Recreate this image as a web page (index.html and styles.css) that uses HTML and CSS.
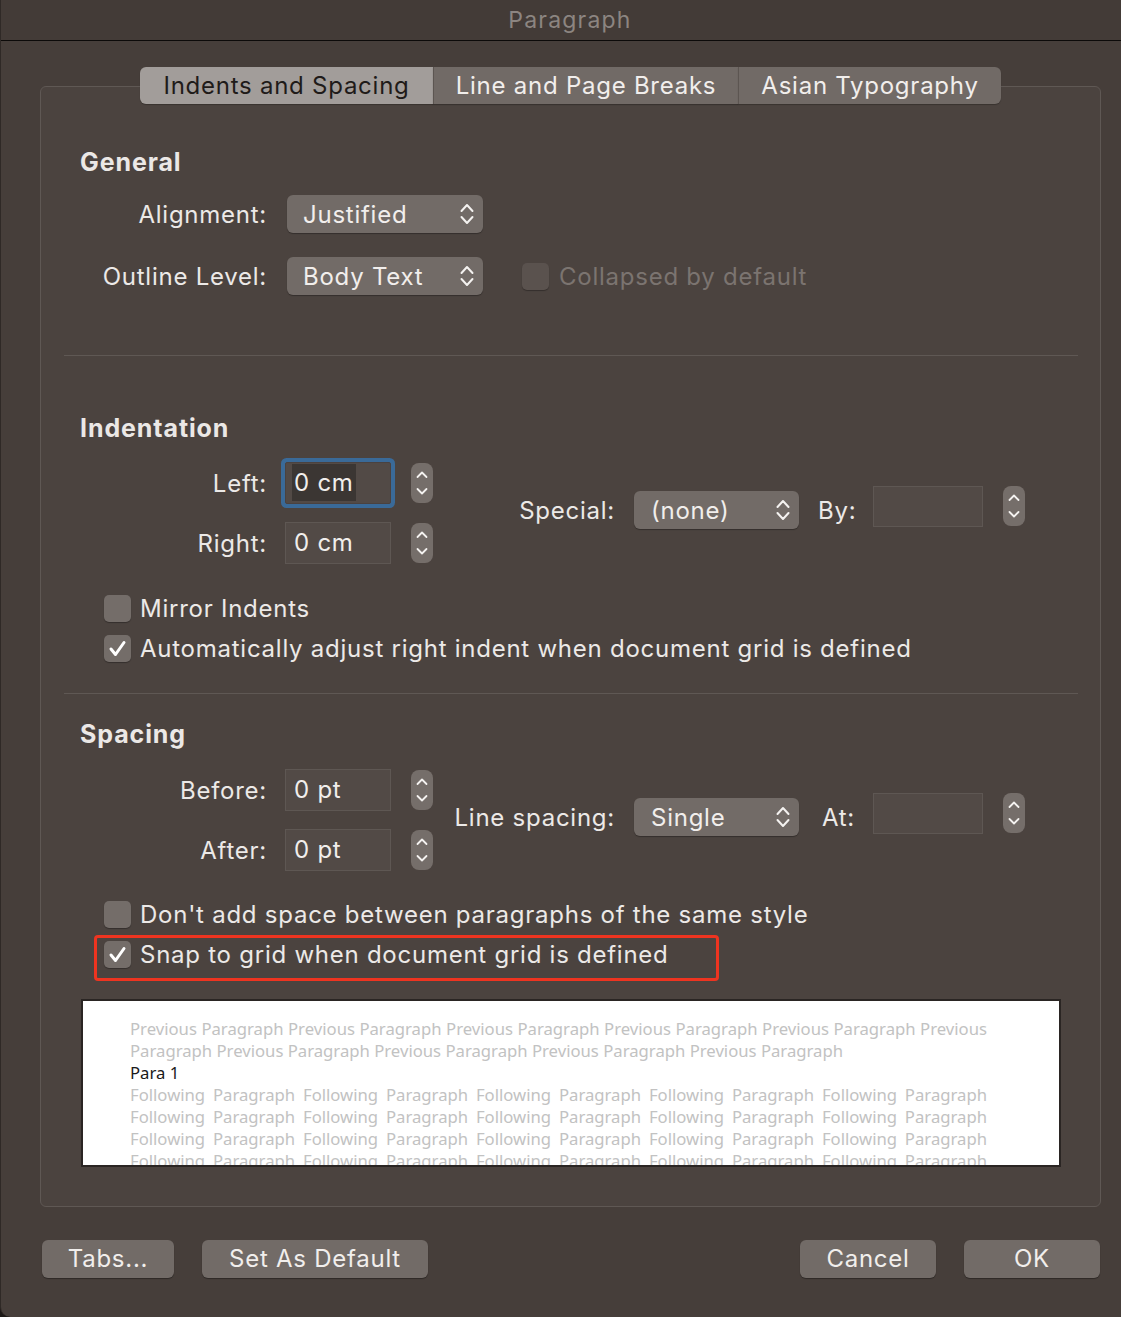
FILE: index.html
```html
<!doctype html>
<html>
  <head>
    <meta charset="UTF-8" />
    <title>Paragraph</title>
    <link rel="stylesheet" href="styles.css">
  </head>
  <body>
    <div class="window">
      <div class="titlebar">Paragraph</div>

      <div class="panel">
        <div class="tabs">
          <div class="tab selected tab-indents">Indents and Spacing</div>
          <div class="tab tab-breaks">Line and Page Breaks</div>
          <div class="tab tab-asian">Asian Typography</div>
        </div>

        <!-- General -->
        <div class="heading heading-general">General</div>
        <div class="form-row first">
          <div class="label">Alignment:</div>
          <div class="popup">
            <span>Justified</span>
            <svg class="chevrons" width="14" height="24" viewBox="0 0 14 24"><path d="M1.5 9 L7 3 L12.5 9 M1.5 15 L7 21 L12.5 15" /></svg>
          </div>
        </div>
        <div class="form-row">
          <div class="label">Outline Level:</div>
          <div class="popup">
            <span>Body Text</span>
            <svg class="chevrons" width="14" height="24" viewBox="0 0 14 24"><path d="M1.5 9 L7 3 L12.5 9 M1.5 15 L7 21 L12.5 15" /></svg>
          </div>
          <div class="check disabled collapsed">
            <span class="box"></span>
            <span>Collapsed by default</span>
          </div>
        </div>

        <div class="separator sep-1"></div>

        <!-- Indentation -->
        <div class="heading heading-indent">Indentation</div>
        <div class="field-block block-indent">
          <div class="field-col">
            <div class="field-row">
              <div class="label">Left:</div>
              <div class="field focused"><span class="selected-text">0 cm</span></div>
              <svg class="stepper" width="22" height="40" viewBox="0 0 22 40"><rect width="22" height="40" rx="8" /><path d="M6.5 14 L11 9.5 L15.5 14 M6.5 26 L11 30.5 L15.5 26" /></svg>
            </div>
            <div class="field-row">
              <div class="label">Right:</div>
              <div class="field">0 cm</div>
              <svg class="stepper" width="22" height="40" viewBox="0 0 22 40"><rect width="22" height="40" rx="8" /><path d="M6.5 14 L11 9.5 L15.5 14 M6.5 26 L11 30.5 L15.5 26" /></svg>
            </div>
          </div>
          <div class="side-group">
            <div class="side-label">Special:</div>
            <div class="popup popup-side">
              <span>(none)</span>
              <svg class="chevrons" width="14" height="24" viewBox="0 0 14 24"><path d="M1.5 9 L7 3 L12.5 9 M1.5 15 L7 21 L12.5 15" /></svg>
            </div>
            <div class="by-label">By:</div>
            <div class="field field-side"></div>
            <svg class="stepper raised" width="22" height="40" viewBox="0 0 22 40"><rect width="22" height="40" rx="8" /><path d="M6.5 14 L11 9.5 L15.5 14 M6.5 26 L11 30.5 L15.5 26" /></svg>
          </div>
        </div>

        <div class="check-list list-indent">
          <div class="check">
            <span class="box"></span>
            <span>Mirror Indents</span>
          </div>
          <div class="check">
            <span class="box"><svg width="27" height="27" viewBox="0 0 27 27"><path d="M7 14 L11.5 19.5 L20 7.5" /></svg></span>
            <span>Automatically adjust right indent when document grid is defined</span>
          </div>
        </div>

        <div class="separator sep-2"></div>

        <!-- Spacing -->
        <div class="heading heading-spacing">Spacing</div>
        <div class="field-block block-spacing">
          <div class="field-col">
            <div class="field-row">
              <div class="label">Before:</div>
              <div class="field">0 pt</div>
              <svg class="stepper" width="22" height="40" viewBox="0 0 22 40"><rect width="22" height="40" rx="8" /><path d="M6.5 14 L11 9.5 L15.5 14 M6.5 26 L11 30.5 L15.5 26" /></svg>
            </div>
            <div class="field-row">
              <div class="label">After:</div>
              <div class="field">0 pt</div>
              <svg class="stepper" width="22" height="40" viewBox="0 0 22 40"><rect width="22" height="40" rx="8" /><path d="M6.5 14 L11 9.5 L15.5 14 M6.5 26 L11 30.5 L15.5 26" /></svg>
            </div>
          </div>
          <div class="side-group">
            <div class="side-label">Line spacing:</div>
            <div class="popup popup-side">
              <span>Single</span>
              <svg class="chevrons" width="14" height="24" viewBox="0 0 14 24"><path d="M1.5 9 L7 3 L12.5 9 M1.5 15 L7 21 L12.5 15" /></svg>
            </div>
            <div class="by-label">At:</div>
            <div class="field field-side"></div>
            <svg class="stepper raised" width="22" height="40" viewBox="0 0 22 40"><rect width="22" height="40" rx="8" /><path d="M6.5 14 L11 9.5 L15.5 14 M6.5 26 L11 30.5 L15.5 26" /></svg>
          </div>
        </div>

        <div class="check-list list-spacing">
          <div class="check">
            <span class="box"></span>
            <span>Don't add space between paragraphs of the same style</span>
          </div>
          <div class="check marked">
            <span class="box"><svg width="27" height="27" viewBox="0 0 27 27"><path d="M7 14 L11.5 19.5 L20 7.5" /></svg></span>
            <span>Snap to grid when document grid is defined</span>
            <span class="highlight"></span>
          </div>
        </div>

        <!-- Preview -->
        <div class="preview">
          <div class="preview-text">
            <div class="line prev justify">Previous Paragraph Previous Paragraph Previous Paragraph Previous Paragraph Previous Paragraph Previous</div>
            <div class="line prev">Paragraph Previous Paragraph Previous Paragraph Previous Paragraph Previous Paragraph</div>
            <div class="line current">Para 1</div>
            <div class="line follow justify">Following Paragraph Following Paragraph Following Paragraph Following Paragraph Following Paragraph</div>
            <div class="line follow justify">Following Paragraph Following Paragraph Following Paragraph Following Paragraph Following Paragraph</div>
            <div class="line follow justify">Following Paragraph Following Paragraph Following Paragraph Following Paragraph Following Paragraph</div>
            <div class="line follow justify">Following Paragraph Following Paragraph Following Paragraph Following Paragraph Following Paragraph</div>
          </div>
        </div>
      </div>

      <div class="buttons">
        <div class="button btn-tabs">Tabs...</div>
        <div class="button btn-default">Set As Default</div>
        <div class="spacer"></div>
        <div class="button btn-cancel">Cancel</div>
        <div class="button btn-ok">OK</div>
      </div>
    </div>
  </body>
</html>
```

FILE: styles.css
```css
body {
  margin: 0;
  padding: 0;
  background-color: #1c1816;
  font-family: "Inter", "Liberation Sans", sans-serif;
  color: #ece9e7;
}

.window {
  width: 1121px;
  height: 1317px;
  background-color: #463e3a;
  border-bottom-left-radius: 10px;
  overflow: hidden;
  box-sizing: border-box;
  border-left: 1px solid #2f2926;
  letter-spacing: 0.75px;
}

.titlebar {
  height: 40px;
  line-height: 40px;
  background-color: #433b37;
  border-bottom: 1px solid #0c0a09;
  text-align: center;
  padding-left: 18px;
  color: #8c8581;
  font-size: 23px;
  letter-spacing: 1.2px;
}

.panel {
  margin: 45px 20px 0 39px;
  border: 1px solid #5f5854;
  border-radius: 6px;
  background-color: #4b433f;
  padding-bottom: 39px;
}

/* tabs */
.tabs {
  display: flex;
  justify-content: center;
  margin-top: -20px;
}

.tab {
  height: 37px;
  line-height: 37px;
  background-color: #716a66;
  color: #f1eeec;
  font-size: 24px;
  text-align: center;
  border-left: 1px solid #5c5551;
  box-shadow: 0 1px 1px rgba(0, 0, 0, 0.25);
}

.tab.selected {
  background-color: #a29d9a;
  color: #1f1b19;
  border-left: none;
  border-radius: 6px 0 0 6px;
}

.tab-indents { width: 293px; }
.tab-breaks { width: 304px; }
.tab-asian { width: 262px; border-radius: 0 6px 6px 0; }

.heading {
  font-size: 25px;
  font-weight: 700;
  line-height: 30px;
  letter-spacing: 0.9px;
  padding-left: 39px;
  color: #ebe8e6;
}

.heading-general { margin-top: 43px; }
.heading-indent { margin-top: 57px; }
.heading-spacing { margin-top: 25px; }

.form-row {
  display: flex;
  align-items: center;
  height: 38px;
  margin-top: 24px;
}

.form-row.first { margin-top: 18px; }

.label {
  width: 226px;
  text-align: right;
  font-size: 24px;
  flex-shrink: 0;
}

.popup {
  display: flex;
  align-items: center;
  justify-content: space-between;
  box-sizing: border-box;
  width: 196px;
  height: 38px;
  margin-left: 20px;
  padding: 0 9px 0 16px;
  background-color: #726b67;
  border-radius: 6px;
  font-size: 24px;
  color: #f1eeec;
  box-shadow: 0 1px 1px rgba(0, 0, 0, 0.3);
}

.chevrons path {
  fill: none;
  stroke: #f4f2f0;
  stroke-width: 2;
  stroke-linecap: round;
  stroke-linejoin: round;
}

.separator {
  height: 1px;
  background-color: #5f5854;
  margin: 0 22px 0 23px;
}

.sep-1 { margin-top: 60px; }
.sep-2 { margin-top: 25px; }

/* field blocks */
.field-block {
  display: flex;
  align-items: center;
}

.block-indent { margin-top: 19px; }
.block-spacing { margin-top: 20px; }

.field-col {
  display: flex;
  flex-direction: column;
  gap: 18px;
}

.field-row {
  display: flex;
  align-items: center;
  height: 42px;
}

.field {
  box-sizing: border-box;
  width: 106px;
  height: 42px;
  margin-left: 18px;
  padding-left: 8px;
  line-height: 40px;
  background-color: #524a46;
  border: 1px solid #5e5753;
  font-size: 24px;
  color: #f1eeec;
}

.field.focused {
  border-color: #4a4240;
  box-shadow: 0 0 0 4px #3a6a98;
  border-radius: 2px;
  padding-left: 6px;
}

.selected-text {
  background-color: #3b3633;
  padding: 4px 2px;
}

.stepper {
  margin-left: 20px;
  flex-shrink: 0;
}

.stepper rect {
  fill: #756e6a;
}

.stepper path {
  fill: none;
  stroke: #f4f2f0;
  stroke-width: 1.8;
  stroke-linecap: round;
  stroke-linejoin: round;
}

.side-group {
  display: flex;
  align-items: center;
  margin-bottom: 6px;
}

.side-label {
  width: 182px;
  text-align: right;
  font-size: 24px;
}

.popup-side {
  width: 165px;
  margin-left: 19px;
  padding-left: 17px;
}

.by-label {
  width: 37px;
  margin: 0 18px 0 19px;
  text-align: right;
  font-size: 24px;
}

.field-side {
  width: 110px;
  height: 41px;
  margin-left: 0;
  margin-bottom: 8px;
}

.stepper.raised {
  margin-bottom: 8px;
}

/* checkboxes */
.check-list {
  padding-left: 63px;
}

.list-indent { margin-top: 24px; }
.list-spacing { margin-top: 23px; }

.check {
  display: flex;
  align-items: center;
  height: 40px;
  font-size: 24px;
  position: relative;
}

.check .box {
  width: 27px;
  height: 27px;
  border-radius: 5px;
  background-color: #746d69;
  margin-right: 9px;
  flex-shrink: 0;
  box-shadow: 0 1px 1px rgba(0, 0, 0, 0.3);
}

.check .box path {
  fill: none;
  stroke: #ffffff;
  stroke-width: 3;
  stroke-linecap: round;
  stroke-linejoin: round;
}

.check.collapsed {
  margin-left: 39px;
  color: #7b7470;
}

.check.disabled .box {
  background-color: #5a524e;
  margin-right: 10px;
}

.highlight {
  position: absolute;
  left: -10px;
  top: 1px;
  width: 625px;
  height: 46px;
  box-sizing: border-box;
  border: 3px solid #ee3420;
  border-radius: 4px;
}

/* preview */
.preview {
  margin: 25px 39px 0 40px;
  height: 168px;
  box-sizing: border-box;
  background-color: #ffffff;
  border: 2px solid #2a2523;
  overflow: hidden;
  padding: 17px 0 0 47px;
  letter-spacing: 0;
}

.preview-text {
  width: 857px;
  font-family: "Noto Sans", "Open Sans", sans-serif;
  font-size: 16.7px;
  line-height: 22px;
}

.line {
  white-space: nowrap;
  height: 22px;
}

.line.prev,
.line.follow {
  color: #c2c2c2;
}

.line.justify {
  white-space: normal;
  text-align: justify;
  text-align-last: justify;
}

.line.current {
  color: #1a1a1a;
}

/* bottom buttons */
.buttons {
  display: flex;
  margin-top: 33px;
  padding: 0 21px 0 41px;
  gap: 28px;
}

.spacer {
  flex-grow: 1;
}

.button {
  height: 38px;
  line-height: 38px;
  text-align: center;
  background-color: #726b67;
  border-radius: 6px;
  font-size: 24px;
  color: #f1eeec;
  box-shadow: 0 1px 1px rgba(0, 0, 0, 0.35);
}

.btn-tabs { width: 132px; }
.btn-default { width: 226px; }
.btn-cancel { width: 136px; }
.btn-ok { width: 136px; }
```
